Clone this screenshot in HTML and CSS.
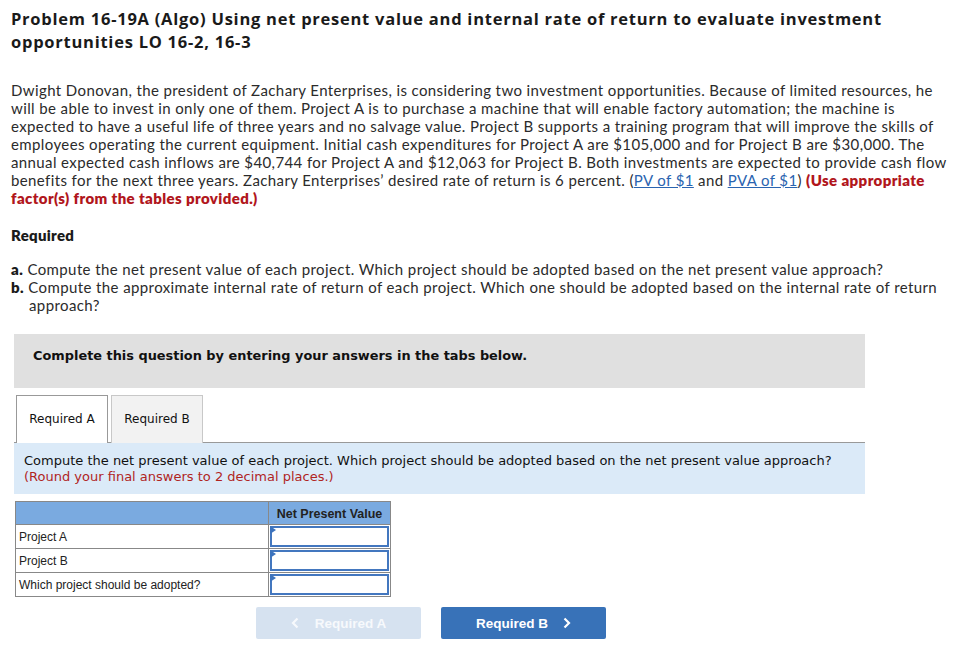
FILE: index.html
```html
<!DOCTYPE html>
<html>
<head>
<meta charset="utf-8">
<link rel="stylesheet" href="styles.css">
</head>
<body>
<div class="page">
  <h1 class="title">Problem 16-19A (Algo) Using net present value and internal rate of return to evaluate investment<br>opportunities LO 16-2, 16-3</h1>
  <p class="para">Dwight Donovan, the president of Zachary Enterprises, is considering two investment opportunities. Because of limited resources, he<br>will be able to invest in only one of them. Project A is to purchase a machine that will enable factory automation; the machine is<br>expected to have a useful life of three years and no salvage value. Project B supports a training program that will improve the skills of<br>employees operating the current equipment. Initial cash expenditures for Project A are $105,000 and for Project B are $30,000. The<br>annual expected cash inflows are $40,744 for Project A and $12,063 for Project B. Both investments are expected to provide cash flow<br>benefits for the next three years. Zachary Enterprises’ desired rate of return is 6 percent. (<a class="link">PV of $1</a> and <a class="link">PVA of $1</a>) <strong class="red">(Use appropriate<br>factor(s) from the tables provided.)</strong></p>
  <div class="req-head">Required</div>
  <ul class="req-list">
    <li><b>a.</b> Compute the net present value of each project. Which project should be adopted based on the net present value approach?</li>
    <li><b>b.</b> Compute the approximate internal rate of return of each project. Which one should be adopted based on the internal rate of return<br>approach?</li>
  </ul>
  <div class="notice">Complete this question by entering your answers in the tabs below.</div>
  <div class="tabs">
    <div class="tab active">Required A</div>
    <div class="tab">Required B</div>
  </div>
  <div class="prompt">
    <div>Compute the net present value of each project. Which project should be adopted based on the net present value approach?</div>
    <div class="round">(Round your final answers to 2 decimal places.)</div>
  </div>
  <table class="grid">
    <tr class="head"><th class="blank"></th><th class="col">Net Present Value</th></tr>
    <tr><td class="label">Project A</td><td class="input"><span class="box"></span><span class="tri"></span></td></tr>
    <tr><td class="label">Project B</td><td class="input"><span class="box"></span><span class="tri"></span></td></tr>
    <tr><td class="label">Which project should be adopted?</td><td class="input"><span class="box"></span><span class="tri"></span></td></tr>
  </table>
  <div class="nav">
    <button class="btn prev"><svg class="chev left" width="8" height="12" viewBox="0 0 8 12"><path d="M6.5 1.5 L2 6 L6.5 10.5" fill="none" stroke="currentColor" stroke-width="2.2"/></svg>Required A</button>
    <button class="btn next">Required B<svg class="chev right" width="8" height="12" viewBox="0 0 8 12"><path d="M1.5 1.5 L6 6 L1.5 10.5" fill="none" stroke="currentColor" stroke-width="2.2"/></svg></button>
  </div>
</div>
</body>
</html>
```
FILE: styles.css
```css
* { box-sizing: border-box; }
body { margin: 0; background: #fff; color: #222; font-family: "Lato", "Liberation Sans", sans-serif; }
.page { padding: 7px 0 0 11px; width: 958px; }
.title { margin: 0; font-family: "Open Sans", "Lato", sans-serif; font-size: 16.5px; line-height: 23px; font-weight: 700; letter-spacing: 0.75px; color: #1a1a1a; white-space: nowrap; }
.para { margin: 28px 0 0; font-size: 15px; line-height: 18px; letter-spacing: 0.39px; color: #2b2b2b; white-space: nowrap; }
.link { color: #2a64b0; text-decoration: underline; }
.red { color: #b1161c; font-weight: 800; }
.req-head { margin-top: 19px; font-size: 15px; line-height: 18px; font-weight: 800; letter-spacing: 0.3px; color: #1a1a1a; }
.req-list { list-style: none; margin: 16px 0 0; padding: 0; font-size: 15px; line-height: 18px; letter-spacing: 0.4px; color: #2b2b2b; white-space: nowrap; }
.req-list li { padding-left: 18px; text-indent: -18px; }
.req-list b { font-weight: 800; color: #1a1a1a; }
.notice { margin: 20px 0 0 3px; width: 851px; height: 54px; background: #e0e0e0; padding: 13px 0 0 19px; font-family: "DejaVu Sans", Verdana, sans-serif; font-weight: bold; font-size: 12.9px; line-height: 18px; color: #111; }
.tabs { display: flex; margin: 7px 0 0 3px; width: 851px; border-bottom: 1px solid #999; height: 48px; padding-left: 2px; gap: 3px; }
.tab { width: 92px; height: 48px; border: 1px solid #c8c8c8; border-bottom: none; background: #f2f2f2; font-family: "DejaVu Sans", Verdana, sans-serif; font-size: 12px; color: #111; display: flex; align-items: center; justify-content: center; padding-bottom: 2px; }
.tab.active { background: #fff; border-color: #999; height: 48px; margin-bottom: -1px; }
.prompt { margin-left: 3px; width: 851px; height: 51px; background: #dbeaf8; padding: 10px 0 0 10px; font-family: "DejaVu Sans", Verdana, sans-serif; font-size: 13px; line-height: 16px; color: #111; white-space: nowrap; }
.round { color: #b0251f; }
.grid { margin: 7px 0 0 4px; border-collapse: collapse; font-family: "Liberation Sans", Arial, sans-serif; font-size: 12px; color: #222; }
.grid th, .grid td { border: 1px solid #888; padding: 0; }
.grid .head th { height: 23px; background: #7aaae0; }
.grid .blank { width: 253px; }
.grid .col { width: 122px; font-weight: bold; font-size: 12.5px; color: #222; text-align: center; padding-top: 1px; }
.grid td { height: 24px; }
.grid .label { padding-left: 3px; }
.grid .input { position: relative; }
.box { position: absolute; left: 1px; top: 1px; right: 1px; bottom: 1px; border: 2px solid #4377bf; background: #fff; }
.tri { position: absolute; left: 1px; top: 1px; width: 0; height: 0; border-top: 4px solid transparent; border-bottom: 4px solid transparent; border-left: 6px solid #3c73bd; }
.nav { display: flex; gap: 20px; margin: 10px 0 0 245px; }
.btn { width: 165px; height: 32px; border: none; border-radius: 2px; font-family: "Liberation Sans", Arial, sans-serif; font-weight: bold; font-size: 13.5px; color: #fff; display: flex; align-items: center; justify-content: center; padding: 0; }
.prev { background: #d6e2f0; color: #f7f9fc; }
.next { background: #3872b8; }
.chev.left { margin-right: 16px; }
.chev.right { margin-left: 15px; }
```
